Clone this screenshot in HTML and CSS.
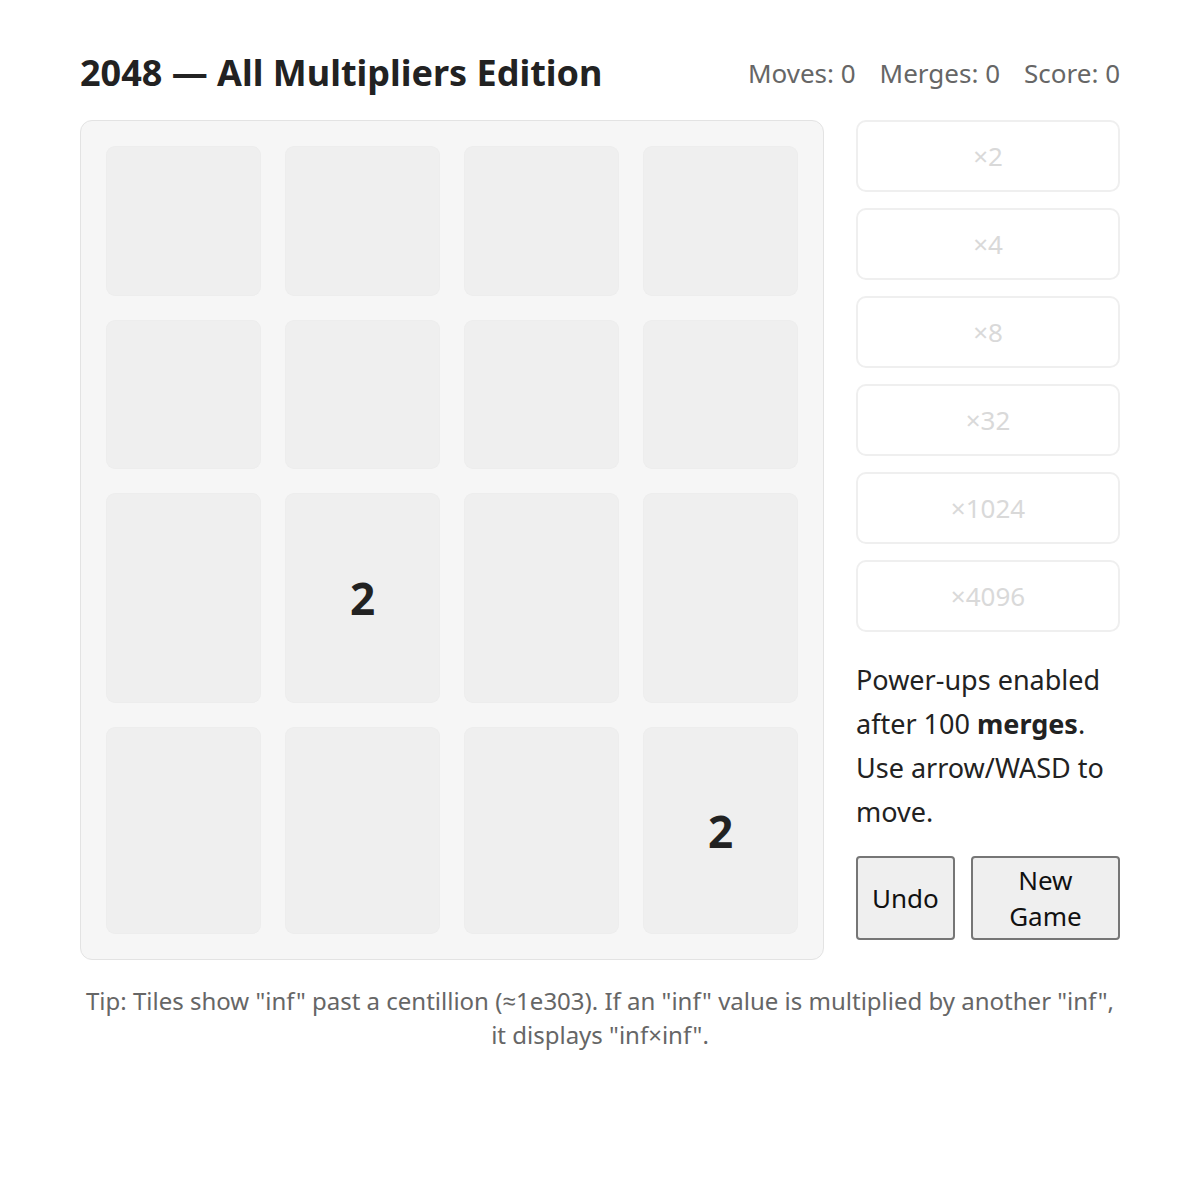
FILE: index.html
```html
<!DOCTYPE html>
<html lang="en">
<head>
    <meta charset="UTF-8" />
    <meta name="viewport" content="width=device-width, initial-scale=1.0" />
    <link rel="stylesheet" href="styles.css">
    <title>2048 — All Multipliers Edition</title>
</head>
<body>
    <div class="app">
        <header class="top">
            <h1>2048 — All Multipliers Edition</h1>
            <div class="stats">
                <span>Moves: 0</span>
                <span>Merges: 0</span>
                <span>Score: 0</span>
            </div>
        </header>

        <main class="game">
            <div class="board">
                <div class="tile"></div>
                <div class="tile"></div>
                <div class="tile"></div>
                <div class="tile"></div>

                <div class="tile"></div>
                <div class="tile"></div>
                <div class="tile"></div>
                <div class="tile"></div>

                <div class="tile"></div>
                <div class="tile">2</div>
                <div class="tile"></div>
                <div class="tile"></div>

                <div class="tile"></div>
                <div class="tile"></div>
                <div class="tile"></div>
                <div class="tile">2</div>
            </div>

            <aside class="panel">
                <div class="powerups">
                    <button class="powerup" disabled>×2</button>
                    <button class="powerup" disabled>×4</button>
                    <button class="powerup" disabled>×8</button>
                    <button class="powerup" disabled>×32</button>
                    <button class="powerup" disabled>×1024</button>
                    <button class="powerup" disabled>×4096</button>
                </div>
                <p class="info">Power-ups enabled after 100 <strong>merges</strong>. Use arrow/WASD to move.</p>
                <div class="actions">
                    <button class="action">Undo</button>
                    <button class="action grow">New Game</button>
                </div>
            </aside>
        </main>

        <p class="tip">Tip: Tiles show "inf" past a centillion (≈1e303). If an "inf" value is multiplied by another "inf", it displays "inf×inf".</p>
    </div>
</body>
</html>
```

FILE: styles.css
```css
* {
    box-sizing: border-box;
    margin: 0;
    padding: 0;
}
body {
    background-color: #fff;
    font-family: "Noto Sans", "Open Sans", sans-serif;
    color: #222;
}
.app {
    width: 1040px;
    margin: 0 auto;
    padding-top: 48px;
}
.top {
    display: flex;
    justify-content: space-between;
    align-items: center;
    margin-bottom: 23px;
}
.top h1 {
    font-size: 36px;
    font-weight: 700;
    line-height: 49px;
    color: #222;
}
.stats {
    display: flex;
    gap: 24px;
    font-size: 26px;
    color: #666;
}
.game {
    display: grid;
    grid-template-columns: 1fr 264px;
    gap: 32px;
    align-items: start;
}
.board {
    display: grid;
    grid-template-columns: repeat(4, 1fr);
    grid-template-rows: 150px 149px 210px 207px;
    gap: 24px;
    padding: 25px;
    background-color: #f6f6f6;
    border: 1px solid #e3e3e3;
    border-radius: 12px;
}
.tile {
    display: flex;
    align-items: center;
    justify-content: center;
    background-color: #efefef;
    border-radius: 9px;
    box-shadow: inset 0 0 2px rgba(0, 0, 0, 0.03);
    font-size: 44px;
    font-weight: 700;
    color: #222;
}
.panel {
    display: flex;
    flex-direction: column;
}
.powerups {
    display: flex;
    flex-direction: column;
    gap: 16px;
}
.powerup {
    height: 72px;
    font-family: inherit;
    font-size: 26px;
    color: #d9d9d9;
    background-color: #fff;
    border: 2px solid #efefef;
    border-radius: 10px;
}
.info {
    margin: 26px 0 22px;
    font-size: 27px;
    line-height: 44px;
    color: #222;
}
.info strong {
    font-weight: 700;
}
.actions {
    display: flex;
    gap: 16px;
}
.action {
    padding: 4px 14px;
    font-family: inherit;
    font-size: 26px;
    line-height: 36px;
    color: #111;
    background-color: #efefef;
    border: 2px solid #767676;
    border-radius: 4px;
}
.action.grow {
    flex: 1;
}
.tip {
    margin-top: 24px;
    font-size: 24px;
    line-height: 34px;
    color: #666;
    text-align: center;
}
```
